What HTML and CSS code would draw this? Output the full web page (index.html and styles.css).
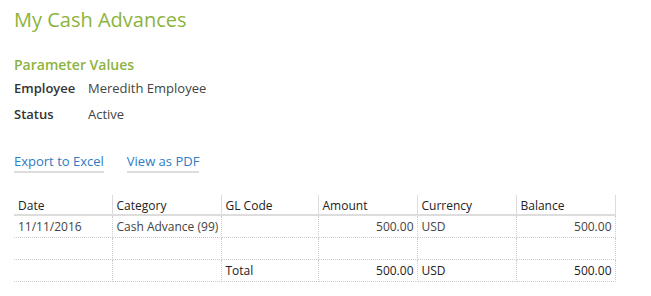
FILE: index.html
```html
<!DOCTYPE html>
<html>
<head>
<meta charset="utf-8">
<link rel="stylesheet" href="styles.css">
</head>
<body>
<div class="page">
  <h1 class="title">My Cash Advances</h1>
  <h2 class="subtitle">Parameter Values</h2>
  <div class="params">
    <div class="param"><span class="pname">Employee</span><span class="pval">Meredith Employee</span></div>
    <div class="param"><span class="pname">Status</span><span class="pval">Active</span></div>
  </div>
  <div class="links">
    <a class="link" href="#">Export to Excel</a>
    <a class="link" href="#">View as PDF</a>
  </div>
  <table class="report">
    <colgroup>
      <col class="c1"><col class="c2"><col class="c3"><col class="c4"><col class="c5"><col class="c6">
    </colgroup>
    <thead>
      <tr><th>Date</th><th>Category</th><th>GL Code</th><th>Amount</th><th>Currency</th><th>Balance</th></tr>
    </thead>
    <tbody>
      <tr><td>11/11/2016</td><td>Cash Advance (99)</td><td></td><td class="num">500.00</td><td>USD</td><td class="num">500.00</td></tr>
      <tr><td></td><td></td><td></td><td></td><td></td><td></td></tr>
      <tr class="total"><td></td><td></td><td>Total</td><td class="num">500.00</td><td>USD</td><td class="num">500.00</td></tr>
    </tbody>
  </table>
</div>
</body>
</html>
```

FILE: styles.css
```css
html, body { margin: 0; padding: 0; background: #fff; }
body { font-family: "Open Sans", "Liberation Sans", sans-serif; color: #333; }
.page { padding: 6px 14px 0 14px; }
.title { margin: 0; font-size: 20px; font-weight: 400; color: #8db33f; line-height: 28px; }
.subtitle { margin: 22px 0 0 0; font-size: 14px; font-weight: 600; color: #8db33f; line-height: 18px; }
.params { margin-top: 1px; }
.param { display: flex; height: 26px; align-items: center; font-size: 13px; }
.pname { width: 74px; font-weight: 600; color: #333; }
.pval { color: #444; }
.links { display: flex; gap: 23px; margin-top: 25px; font-size: 13px; }
.link { color: #2e7cc3; text-decoration: none; border-bottom: 2px solid #ddd; line-height: 18px; padding-bottom: 1px; }
.report { margin-top: 22px; border-collapse: collapse; font-size: 12px; table-layout: fixed; width: 601px; }
.c1 { width: 98px; } .c2 { width: 109px; } .c3 { width: 97px; } .c4 { width: 99px; } .c5 { width: 99px; } .c6 { width: 99px; }
.report th { text-align: left; font-weight: 400; color: #222; height: 17px; padding: 2px 4px 0 4px; white-space: nowrap; border-left: 1px solid #ddd; border-right: 1px solid #ddd; border-bottom: 2px solid #ddd; }
.report th:first-child { border-left: none; }
.report td { height: 21px; padding: 0 3px 0 4px; color: #444; white-space: nowrap; overflow: visible; border: 1px dotted #ccc; }
.report td:first-child { border-left: none; }
.report .num { text-align: right; }
.report .total td { color: #222; }
```
